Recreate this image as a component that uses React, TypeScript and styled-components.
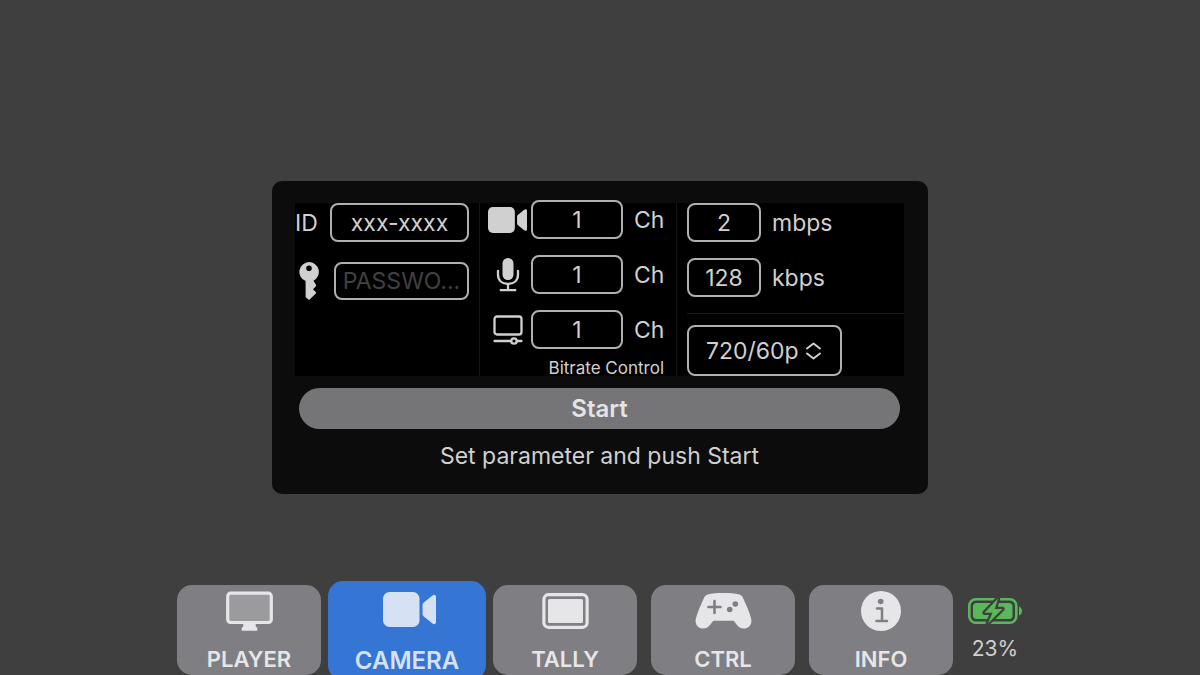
import React, { useState } from "react";
import styled, { createGlobalStyle, css } from "styled-components";

const GlobalStyle = createGlobalStyle`
  *, *::before, *::after { box-sizing: border-box; }
  body {
    margin: 0;
    background: #3f3f3f;
    color: #d0d0d0;
    font-family: Inter, "Liberation Sans", sans-serif;
  }
  button, input, select { font: inherit; color: inherit; }
  svg { display: block; flex: none; }
`;

const Page = styled.div`
  min-height: 100vh;
  display: grid;
  grid-template-columns: minmax(0, 1fr);
  grid-template-rows: 1fr auto 1fr;
  justify-items: center;
  overflow: hidden;
`;

const Panel = styled.form`
  grid-row: 2;
  width: 100%;
  max-width: 656px;
  padding: 22px 24px 23px 23px;
  display: flex;
  flex-direction: column;
  border-radius: 10px;
  background: #0c0c0c;
  font-size: 23px;
  line-height: 30px;
`;

const Settings = styled.div`
  display: grid;
  grid-template-columns: 184px 198px minmax(0, 1fr);
  grid-template-rows: minmax(0, 1fr);
  height: 173px;
  background: #000;
`;

const Account = styled.div`
  display: flex;
  flex-direction: column;
  gap: 20px;
  padding-right: 10px;
`;

const AccountRow = styled.div`
  display: flex;
  align-items: center;
  justify-content: space-between;
`;

const AccountLabel = styled.label<{ $inset?: boolean }>`
  padding-left: ${(p) => (p.$inset ? 4 : 0)}px;
`;

const Channels = styled.div`
  display: flex;
  flex-direction: column;
  justify-content: center;
  gap: 16px;
  padding: 0 12px 0 8px;
  border: solid #161616;
  border-width: 0 1px;
`;

const ChannelRow = styled.div`
  display: grid;
  grid-template-columns: 39px 92px auto;
  align-items: center;
  column-gap: 4px;
`;

const IconLabel = styled.label`
  display: flex;
  justify-content: center;
`;

const ChannelUnit = styled.span`
  padding-left: 7px;
`;

const Caption = styled.div`
  margin-top: -8px;
  font-size: 17px;
  line-height: 22px;
  text-align: right;
  white-space: nowrap;
`;

const Rates = styled.div`
  display: flex;
  flex-direction: column;
  gap: 16px;
  padding-left: 10px;
`;

const RateRow = styled.label`
  display: flex;
  align-items: center;
  gap: 11px;
`;

const Rule = styled.hr`
  width: 100%;
  margin: 0;
  border: 0;
  border-top: 1px solid #1c1c1c;
`;

const outlined = css`
  border: 2px solid #b0b0b0;
  border-radius: 8px;
  background: #000;
  outline: none;
`;

const Field = styled.input<{ $width: number; $height?: number }>`
  ${outlined}
  width: ${(p) => p.$width}px;
  height: ${(p) => p.$height ?? 39}px;
  padding: 0 4px;
  text-align: center;
  &::placeholder { color: #414141; opacity: 1; }
`;

const SelectBox = styled.div`
  position: relative;
  width: 155px;
  margin-top: -5px;
`;

const Select = styled.select`
  ${outlined}
  appearance: none;
  width: 100%;
  height: 51px;
  padding: 0 36px 0 17px;
`;

const SelectMark = styled.span`
  position: absolute;
  right: 20px;
  top: 17px;
  pointer-events: none;
`;

const StartButton = styled.button`
  height: 41px;
  margin: 12px 4px 0;
  padding: 0;
  border: 0;
  border-radius: 21px;
  background: #757577;
  color: #e4e4e4;
  font-size: 24px;
  font-weight: 600;
`;

const Hint = styled.p`
  margin: 12px 0 0;
  text-align: center;
`;

const Nav = styled.nav`
  grid-row: 3;
  align-self: end;
  display: flex;
  gap: 14px;
`;

const Tab = styled.button<{ $active?: boolean }>`
  width: 144px;
  height: 90px;
  padding: 6px 0 0;
  display: flex;
  flex-direction: column;
  align-items: center;
  gap: 15px;
  border: 0;
  border-radius: 15px;
  background: #7f7e83;
  color: #e6e6e8;
  font-size: 22px;
  line-height: 26px;
  font-weight: 600;
  ${(p) =>
    p.$active &&
    css`
      width: 158px;
      height: 99px;
      margin: -4px -7px -5px;
      padding-top: 8px;
      gap: 19px;
      background: #3575d4;
      color: #d6e2f3;
      font-size: 24px;
    `}
`;

const TabIcon = styled.span`
  height: 40px;
  display: flex;
  align-items: center;
`;

const Battery = styled.div`
  width: 56px;
  padding-top: 13px;
  display: flex;
  flex-direction: column;
  align-items: center;
  gap: 12px;
  font-size: 21px;
  line-height: 26px;
`;

const VideoIcon = ({ width, height, inset = 0 }: { width: number; height: number; inset?: number }) => (
  <svg width={width} height={height} viewBox={`${-inset} 0 ${53 + inset} 35`} fill="currentColor" aria-hidden="true">
    <rect width="36.5" height="35" rx="6.5" />
    <path d="M39.5 13.2c0-1.200.5-2 1.300-2.700l8.400-6.800c2-1.600 3.800-.8 3.800 1.200v25.200c0 2-1.800 2.800-3.800 1.200l-8.400-6.800c-.8-.700-1.300-1.500-1.300-2.700z" />
  </svg>
);

const KeyIcon = () => (
  <svg width="20" height="38" viewBox="0 0 20 38" fill="currentColor" fillRule="evenodd" aria-hidden="true">
    <path d="M10 0a9.900 9.900 0 0 1 4.500 18.700l2.400 4.100q.5.900-.2 1.700L14 27.300l2.800 2.700q.8.800 0 1.600L10.700 37.600q-.7.600-1.400 0L7 35.400q-.4-.400-.4-1V19.100A9.900 9.900 0 0 1 10 0zM10 3.400a2.800 2.800 0 1 0 0 5.600 2.800 2.800 0 0 0 0-5.600z" />
  </svg>
);

const MicIcon = () => (
  <svg width="24" height="34" viewBox="0 0 24 34" fill="none" stroke="currentColor" strokeWidth="2.300" strokeLinecap="round" aria-hidden="true">
    <rect x="6.500" y="0" width="11" height="22" rx="5.500" fill="currentColor" stroke="none" />
    <path d="M2 13v3.500c0 6 4.200 9.500 10 9.500s10-3.500 10-9.500V13M12 26v6M4.700 32.200h14.600" />
  </svg>
);

const DisplayIcon = () => (
  <svg width="30" height="30" viewBox="0 0 30 30" fill="none" stroke="currentColor" strokeWidth="2.300" strokeLinecap="round" aria-hidden="true">
    <rect x="1.500" y="1.500" width="27" height="18" rx="2.500" />
    <path d="M1.500 26h16.500M24 26h4.500" />
    <circle cx="21" cy="26" r="2.700" />
  </svg>
);

const ChevronsIcon = () => (
  <svg width="17" height="18" viewBox="0 0 17 18" fill="none" stroke="currentColor" strokeWidth="2" strokeLinecap="round" strokeLinejoin="round" aria-hidden="true">
    <path d="M2 6.500l6.500-5 6.500 5M2 11.500l6.500 5 6.500-5" />
  </svg>
);

const MonitorIcon = () => (
  <svg width="47" height="40" viewBox="0 0 47 40" aria-hidden="true">
    <rect x="1.700" y="2.200" width="43.600" height="29.300" rx="3" fill="#9b9b9e" stroke="currentColor" strokeWidth="3.200" />
    <path fill="currentColor" d="M17.300 32h12.400v3.600l1.600 1.200v2.400q0 .6-.6.600H16.300q-.6 0-.6-.6v-2.400l1.600-1.200z" />
  </svg>
);

const TabletIcon = () => (
  <svg width="47" height="36" viewBox="0 0 47 36" aria-hidden="true">
    <rect x="1.900" y="1.700" width="43.200" height="32.600" rx="4.500" fill="none" stroke="currentColor" strokeWidth="3.200" />
    <rect x="6" y="6" width="35" height="24" rx="1.500" fill="currentColor" />
  </svg>
);

const GamepadIcon = () => (
  <svg width="57" height="36" viewBox="0 0 57 36" aria-hidden="true">
    <path
      fill="currentColor"
      d="M12.500 1.500C17 .2 22 0 28.500 0s11.500.2 16 1.500c2 .7 3 2 4 4.500 3 6.500 6 13 7.600 19.500C57.500 31 54 35.500 49 35.500c-3 0-5.200-1.300-7-3.600l-2.500-3.200c-.6-.700-1-.900-2-.900h-18c-1 0-1.400.2-2 .9L15 31.900c-1.800 2.300-4 3.600-7 3.600-5 0-8.500-4.500-7.100-10C2.500 19 5.500 12.500 8.500 6c1-2.500 2-3.800 4-4.500z"
    />
    <path d="M13.500 14h12M19.500 8v12" stroke="#7f7e83" strokeWidth="2.600" strokeLinecap="round" />
    <circle cx="40.300" cy="11" r="2.800" fill="#7f7e83" />
    <circle cx="34.700" cy="16.500" r="2.800" fill="#7f7e83" />
  </svg>
);

const InfoIcon = () => (
  <svg width="40" height="40" viewBox="0 0 40 40" fill="none" aria-hidden="true">
    <circle cx="20" cy="20" r="20" fill="currentColor" />
    <circle cx="19.700" cy="10.500" r="2.800" fill="#7f7e83" />
    <path d="M16 17.600h5V30M15.500 30h10.500" stroke="#7f7e83" strokeWidth="2.500" strokeLinecap="round" strokeLinejoin="round" />
  </svg>
);

const BatteryIcon = () => (
  <svg width="54" height="26" viewBox="0 0 54 26" overflow="visible" aria-hidden="true">
    <rect x="1.300" y="1.300" width="47" height="23.400" rx="6.500" fill="none" stroke="#5bb75c" strokeWidth="2.600" />
    <rect x="5" y="5" width="39.500" height="16" rx="3.500" fill="#5bb75c" />
    <path d="M51 8.500q3 1.500 3 4.500t-3 4.500z" fill="#5bb75c" />
    <path
      d="M30 .5L16.500 14.700h8L19.800 25.500 34.500 10.900h-7.700z"
      fill="#5bb75c"
      stroke="#3f3f3f"
      strokeWidth="4.500"
      strokeLinejoin="round"
      paintOrder="stroke"
    />
  </svg>
);

const channels = [
  { id: "video", name: "Video channel", icon: <VideoIcon width={39} height={26} /> },
  { id: "audio", name: "Audio channel", icon: <MicIcon /> },
  { id: "control", name: "Display channel", icon: <DisplayIcon /> },
];

const tabs = [
  { name: "PLAYER", icon: <MonitorIcon /> },
  { name: "CAMERA", icon: <VideoIcon width={57} height={35} inset={4} /> },
  { name: "TALLY", icon: <TabletIcon /> },
  { name: "CTRL", icon: <GamepadIcon /> },
  { name: "INFO", icon: <InfoIcon /> },
];

export default function App() {
  const [active, setActive] = useState("CAMERA");

  return (
    <>
      <GlobalStyle />
      <Page>
        <Panel onSubmit={(e) => e.preventDefault()}>
          <Settings>
            <Account>
              <AccountRow>
                <AccountLabel htmlFor="user-id">ID</AccountLabel>
                <Field id="user-id" $width={139} defaultValue="xxx-xxxx" />
              </AccountRow>
              <AccountRow>
                <AccountLabel htmlFor="password" aria-label="Password" $inset>
                  <KeyIcon />
                </AccountLabel>
                <Field id="password" type="password" $width={135} $height={38} placeholder="PASSWO..." />
              </AccountRow>
            </Account>

            <Channels>
              {channels.map((c) => (
                <ChannelRow key={c.id}>
                  <IconLabel htmlFor={c.id} aria-label={c.name}>
                    {c.icon}
                  </IconLabel>
                  <Field id={c.id} $width={92} defaultValue="1" />
                  <ChannelUnit>Ch</ChannelUnit>
                </ChannelRow>
              ))}
              <Caption>Bitrate Control</Caption>
            </Channels>

            <Rates>
              <RateRow>
                <Field $width={74} defaultValue="2" />
                mbps
              </RateRow>
              <RateRow>
                <Field $width={74} defaultValue="128" />
                kbps
              </RateRow>
              <Rule />
              <SelectBox>
                <Select aria-label="Resolution" defaultValue="720/60p">
                  <option>720/60p</option>
                </Select>
                <SelectMark>
                  <ChevronsIcon />
                </SelectMark>
              </SelectBox>
            </Rates>
          </Settings>

          <StartButton type="submit">Start</StartButton>
          <Hint>Set parameter and push Start</Hint>
        </Panel>

        <Nav>
          {tabs.map((t) => (
            <Tab key={t.name} type="button" $active={t.name === active} onClick={() => setActive(t.name)}>
              <TabIcon>{t.icon}</TabIcon>
              {t.name}
            </Tab>
          ))}
          <Battery>
            <BatteryIcon />
            23%
          </Battery>
        </Nav>
      </Page>
    </>
  );
}
